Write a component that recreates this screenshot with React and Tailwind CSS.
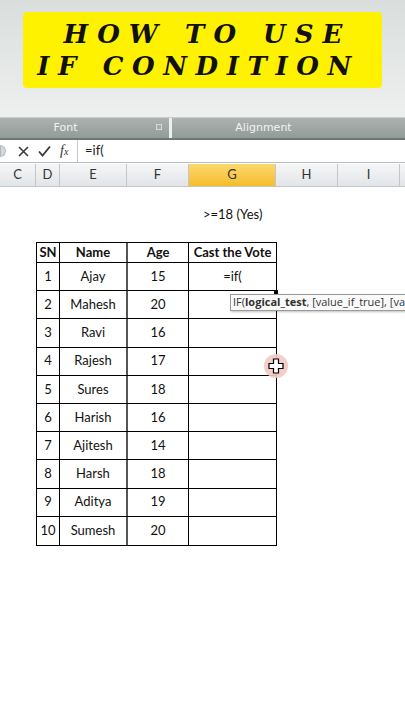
import React from "react";

const rows = [
  ["1", "Ajay", "15"],
  ["2", "Mahesh", "20"],
  ["3", "Ravi", "16"],
  ["4", "Rajesh", "17"],
  ["5", "Sures", "18"],
  ["6", "Harish", "16"],
  ["7", "Ajitesh", "14"],
  ["8", "Harsh", "18"],
  ["9", "Aditya", "19"],
  ["10", "Sumesh", "20"],
];

const cols = [
  ["C", "w-[36px]"],
  ["D", "w-[24px]"],
  ["E", "w-[67px]"],
  ["F", "w-[62px]"],
  ["G", "w-[87px]"],
  ["H", "w-[62px]"],
  ["I", "w-[62px]"],
  ["", "w-[20px]"],
];

export default function App() {
  return (
    <div className="w-[405px] h-[720px] overflow-hidden bg-white relative" style={{ fontFamily: "Lato, 'Open Sans', sans-serif" }}>
      {/* Title area */}
      <div className="h-[117px] bg-gradient-to-b from-[#d9dedd] to-[#eef0ef] pt-[12px] px-[23px]">
        <div className="h-[76px] bg-[#fff200] rounded-[4px] flex flex-col items-center justify-center pl-[10px]">
          <div className="text-[26px] leading-[32px] font-bold italic tracking-[9px] whitespace-nowrap text-[#111]" style={{ fontFamily: "'DejaVu Serif', serif" }}>
            HOW TO USE
          </div>
          <div className="text-[26px] leading-[32px] font-bold italic tracking-[8.6px] whitespace-nowrap text-[#111] -ml-[18px]" style={{ fontFamily: "'DejaVu Serif', serif" }}>
            IF CONDITION
          </div>
        </div>
      </div>

      {/* Ribbon group labels */}
      <div className="h-[21px] flex bg-gradient-to-b from-[#abb2b0] to-[#939b99] border-t border-[#c8cdcc]">
        <div className="w-[169px] relative flex items-center justify-center text-[11px] text-[#f2f4f4]" style={{ fontFamily: "'DejaVu Sans', sans-serif" }}>
          <span className="-ml-[38px]">Font</span>
          <span className="absolute right-[7px] top-[6px] w-[6px] h-[6px] border border-[#d6dad9] bg-[#a4abaa]"></span>
        </div>
        <div className="w-[3px] bg-[#eef0f0]"></div>
        <div className="flex-1 flex items-center justify-center text-[11px] text-[#f2f4f4] -ml-[50px]" style={{ fontFamily: "'DejaVu Sans', sans-serif" }}>
          Alignment
        </div>
      </div>
      <div className="h-[2px] bg-[#6f7674]"></div>

      {/* Formula bar */}
      <div className="h-[23px] flex items-center bg-white border-b border-[#b9bec2]">
        <div className="w-[6px] h-[12px] rounded-r-full bg-[#d7dadd] border border-[#b4b8bb]"></div>
        <div className="w-[71px] flex items-center gap-[9px] pl-[12px] text-[#333]">
          <svg width="11" height="11" viewBox="0 0 11 11"><path d="M1 1 L10 10 M10 1 L1 10" stroke="#3a3a3a" strokeWidth="1.6" /></svg>
          <svg width="13" height="12" viewBox="0 0 13 12"><path d="M1 6.5 L4.5 10.5 L12 1.5" fill="none" stroke="#3a3a3a" strokeWidth="1.8" /></svg>
          <span className="text-[14px] italic leading-none" style={{ fontFamily: "'Liberation Serif', serif" }}>f<span className="text-[10px]">x</span></span>
        </div>
        <div className="w-px h-full bg-[#c7cbce]"></div>
        <div className="pl-[7px] text-[13px] text-[#222]">=if(</div>
      </div>

      {/* Column headers */}
      <div className="h-[23px] mt-px flex bg-gradient-to-b from-[#f5f6f7] to-[#e2e5e8] border-b border-[#c3c7cb]">
        {cols.map(([c, w]) => (
          <div
            key={c + w}
            className={`${w} shrink-0 flex items-center justify-center text-[13px] border-r border-[#c3c7cb] ${c === "G" ? "bg-gradient-to-b from-[#fbd86a] to-[#f5bd2a] text-[#333]" : "text-[#333]"}`}
          >
            {c}
          </div>
        ))}
      </div>

      {/* Sheet */}
      <div className="relative">
        <div className="pt-[19px] pl-[203px] text-[13px] leading-[16px] text-[#111]">&gt;=18 (Yes)</div>
        <div className="mt-[20px] ml-[36px] w-[241px] border border-black text-[13px] text-[#111]">
          <div className="h-[20px] flex font-bold border-b border-black">
            <div className="w-[23px] flex items-center justify-center border-r border-black">SN</div>
            <div className="w-[68px] flex items-center justify-center border-r-2 border-[#555]">Name</div>
            <div className="w-[61px] flex items-center justify-center border-r border-black">Age</div>
            <div className="flex-1 flex items-center justify-center">Cast the Vote</div>
          </div>
          {rows.map(([sn, name, age], i) => (
            <div key={sn} className={`h-[28.2px] flex ${i < rows.length - 1 ? "border-b border-black" : ""}`}>
              <div className="w-[23px] flex items-center justify-center border-r border-black">{sn}</div>
              <div className="w-[68px] flex items-center justify-center border-r-2 border-[#555]">{name}</div>
              <div className="w-[61px] flex items-center justify-center border-r border-black">{age}</div>
              <div className="flex-1 flex items-center justify-center">{i === 0 ? "=if(" : ""}</div>
            </div>
          ))}
        </div>

        {/* fill handle */}
        <div className="absolute left-[274px] top-[103px] w-[4px] h-[4px] bg-black"></div>

        {/* Tooltip */}
        <div className="absolute left-[230px] top-[107px] h-[17px] pl-[2px] pr-[6px] flex items-center bg-[#fafafa] border border-[#9a9a9a] shadow-[1px_1px_2px_rgba(0,0,0,0.25)] text-[11px] text-[#333] whitespace-nowrap" style={{ fontFamily: "'Open Sans', sans-serif" }}>
          IF(<span className="font-bold">logical_test</span>, [value_if_true], [value_if_false])
        </div>

        {/* Cursor */}
        <div className="absolute left-[264px] top-[167px] w-[24px] h-[24px] rounded-full bg-[#f3c9c3] opacity-90"></div>
        <svg className="absolute left-[268px] top-[171px]" width="16" height="16" viewBox="0 0 16 16">
          <path d="M5.5 1 H10.5 V5.5 H15 V10.5 H10.5 V15 H5.5 V10.5 H1 V5.5 H5.5 Z" fill="white" stroke="black" strokeWidth="1.2" />
        </svg>
      </div>
    </div>
  );
}
